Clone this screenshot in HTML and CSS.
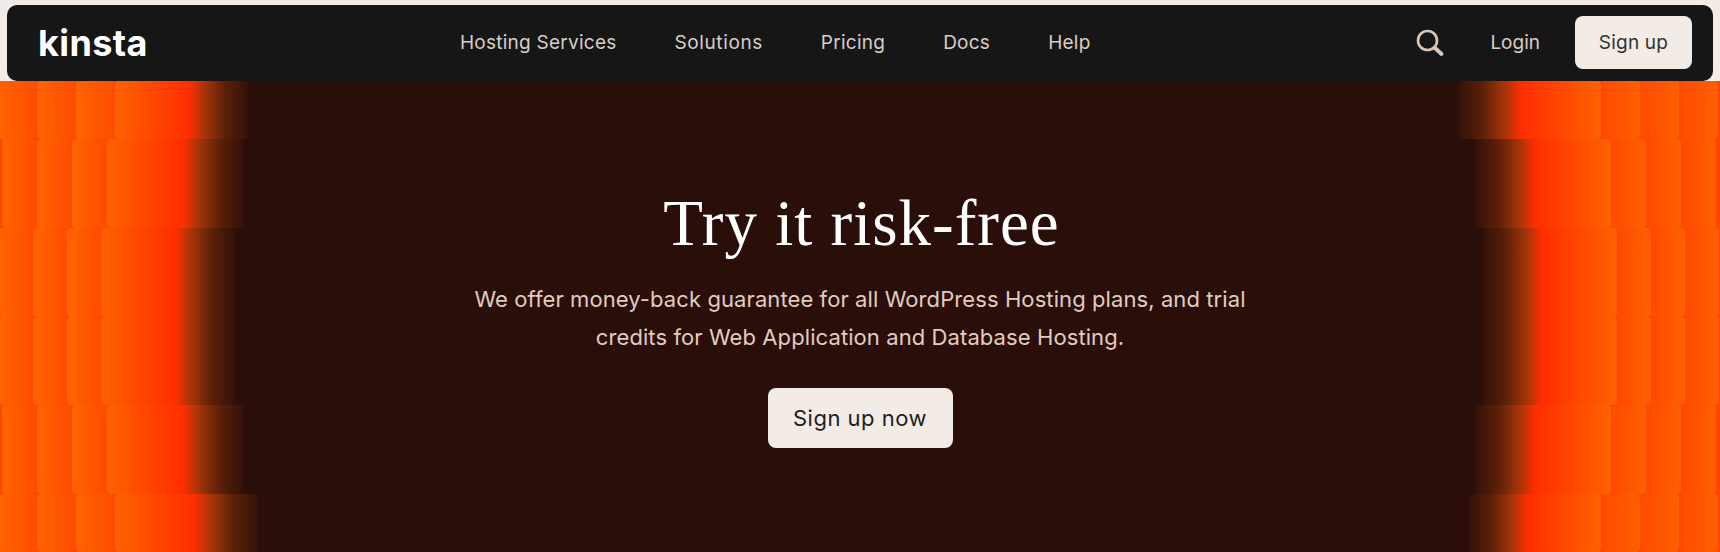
FILE: index.html
```html
<!DOCTYPE html>
<html lang="en">
<head>
  <meta charset="UTF-8">
  <title>Kinsta - Try it risk-free</title>
  <meta name="viewport" content="width=device-width, initial-scale=1.0">
  <link rel="stylesheet" href="styles.css">
</head>
<body>

  <header class="topbar">
    <a href="#" class="logo">kinsta</a>
    <nav class="main-nav">
      <a href="#">Hosting Services</a>
      <a href="#">Solutions</a>
      <a href="#">Pricing</a>
      <a href="#">Docs</a>
      <a href="#">Help</a>
    </nav>
    <div class="actions">
      <a href="#" class="search-link" aria-label="Search">
        <svg width="30" height="30" viewBox="0 0 30 30" fill="none" stroke="#d9c5b8">
          <circle cx="12.5" cy="12.5" r="9.5" stroke-width="2.6"/>
          <path d="M20 20l6.5 6" stroke-width="4" stroke-linecap="round"/>
        </svg>
      </a>
      <a href="#" class="login">Login</a>
      <a href="#" class="btn btn-small">Sign up</a>
    </div>
  </header>

  <section class="hero">
    <div class="bands">
      <div class="band band-a">
        <div class="side"><i></i><i></i><i></i><b></b></div>
        <div class="side right"><b></b><i></i><i></i><i></i></div>
      </div>
      <div class="band band-b">
        <div class="side"><i></i><i></i><i></i><b></b></div>
        <div class="side right"><b></b><i></i><i></i><i></i></div>
      </div>
      <div class="band band-c">
        <div class="side"><i></i><i></i><i></i><b></b></div>
        <div class="side right"><b></b><i></i><i></i><i></i></div>
      </div>
      <div class="band band-c">
        <div class="side"><i></i><i></i><i></i><b></b></div>
        <div class="side right"><b></b><i></i><i></i><i></i></div>
      </div>
      <div class="band band-b">
        <div class="side"><i></i><i></i><i></i><b></b></div>
        <div class="side right"><b></b><i></i><i></i><i></i></div>
      </div>
      <div class="band band-a band-last">
        <div class="side"><i></i><i></i><i></i><b></b></div>
        <div class="side right"><b></b><i></i><i></i><i></i></div>
      </div>
    </div>

    <div class="hero-content">
      <h1>Try it risk-free</h1>
      <p>We offer money-back guarantee for all WordPress Hosting plans, and trial<br>credits for Web Application and Database Hosting.</p>
      <a href="#" class="btn btn-large">Sign up now</a>
    </div>
  </section>

</body>
</html>
```

FILE: styles.css
```css
* { box-sizing: border-box; margin: 0; padding: 0; }

body {
  background: #f2ebe6;
  font-family: Inter, "Noto Sans", sans-serif;
  height: 552px;
  overflow: hidden;
  padding-top: 5px;
}

a { text-decoration: none; color: inherit; }

/* top bar */
.topbar {
  position: relative;
  z-index: 1;
  height: 76px;
  margin: 0 7px;
  padding: 0 21px 1px 31px;
  background: #161616;
  border-radius: 10px;
  display: grid;
  grid-template-columns: 422px auto 1fr;
  align-items: center;
  color: #d9cdc5;
}

.logo {
  color: #fff;
  font-weight: 700;
  font-size: 36px;
  letter-spacing: 0.4px;
  line-height: 1;
}

.main-nav {
  display: flex;
  gap: 58px;
  font-size: 19px;
  letter-spacing: 0.25px;
}

.main-nav a:nth-child(2) { letter-spacing: 0.6px; }

.actions {
  display: flex;
  align-items: center;
  justify-content: flex-end;
  font-size: 19px;
}

.search-link { display: flex; margin-right: 45px; }
.login { margin-right: 35px; }

.btn {
  display: block;
  background: #f2ebe6;
  color: #1d1d1f;
  border-radius: 8px;
  text-align: center;
}

.btn-small {
  width: 117px;
  height: 53px;
  line-height: 53px;
  font-size: 19px;
  letter-spacing: 0.2px;
  color: #333;
}

/* hero */
.hero {
  height: 471px;
  background: #2a0e0a;
  display: grid;
  overflow: hidden;
}

.bands, .hero-content { grid-area: 1 / 1; }

.band {
  display: flex;
  justify-content: space-between;
  height: 89px;
}

.band-a { height: 58px; }
.band-c { height: 88.5px; }

.side {
  display: flex;
  height: 100%;
  background: linear-gradient(90deg, #ff4400 0 122px, transparent 122px);
}

.side.right {
  background: linear-gradient(270deg, #ff4400 0 122px, transparent 122px);
}

.side i, .side b {
  display: block;
  border-radius: 4px;
  background: linear-gradient(90deg, #ff6400, #ff4c00);
}

.right i {
  background: linear-gradient(90deg, #ff4a00, #ff6000);
}

.side b {
  background: linear-gradient(90deg, #ff6200 0%, #ff2e00 55%, #a8350a 66%, #5a2008 82%, #3a1409 96%, #2a0e0a 100%);
  border-radius: 4px 0 0 4px;
}

.right b {
  background: linear-gradient(270deg, #ff6200 0%, #ff2e00 55%, #a8350a 66%, #5a2008 82%, #3a1409 96%, #2a0e0a 100%);
  border-radius: 0 4px 4px 0;
}

/* tile sizes per band */
.band-a .side i { width: 39px; }
.band-a .side:first-child { margin-left: -2px; }
.band-a .side b { width: 135px; }
.band-a .right b { width: 145px; }
.band-a .right { padding-right: 2px; }

.band-b .side i { width: 35px; }
.band-b .side:first-child { padding-left: 2px; }
.band-b .side b { width: 138px; }
.band-b .right { padding-right: 4px; }

.band-c .side i { width: 34px; }
.band-c .side:first-child { margin-left: -1px; }
.band-c .side b { width: 136px; }
.band-c .right { padding-right: 1px; }

.band-last .side b { width: 145px; }
.band-last .right b { width: 134px; }

.hero-content {
  text-align: center;
  color: #e0cdbf;
  padding-top: 107px;
}

h1 {
  font-family: "Liberation Serif", serif;
  font-weight: 400;
  font-size: 65px;
  letter-spacing: 1px;
  line-height: 70px;
  color: #fff;
  margin-bottom: 22px;
  padding-left: 3px;
}

.hero-content p {
  font-size: 22px;
  letter-spacing: 0.09px;
  line-height: 38px;
  margin-bottom: 32px;
}

.btn-large {
  width: 185px;
  height: 60px;
  line-height: 60px;
  margin: 0 auto;
  font-size: 22px;
  letter-spacing: 0.5px;
}
```
